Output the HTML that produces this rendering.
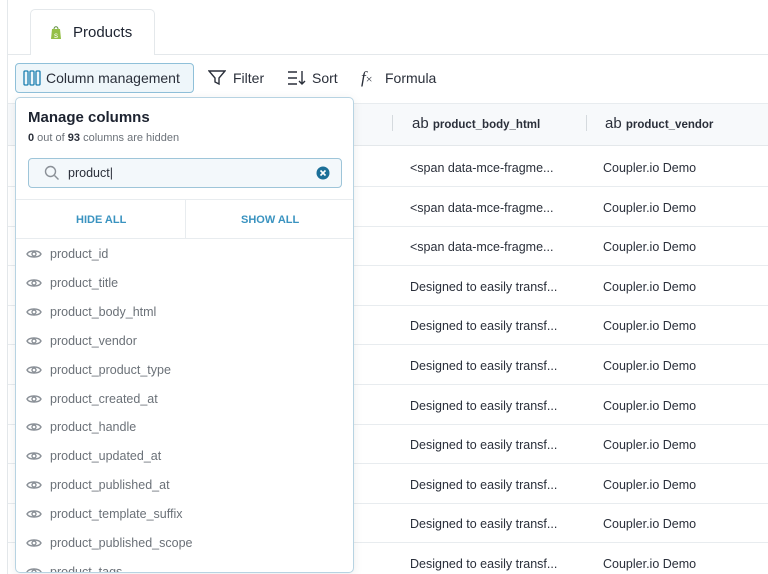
<!DOCTYPE html>
<html><head><style>
*{margin:0;padding:0;box-sizing:border-box}
body{width:768px;height:574px;overflow:hidden;background:#fff;font-family:"Liberation Sans",sans-serif;position:relative;color:#2a2f3a}
.abs{position:absolute}
.row{position:absolute;left:8px;width:760px;height:1px;background:#e8ecef}
.cell{position:absolute;font-size:12.5px;color:#2a2f3a}
.li{position:absolute;left:10px;font-size:12.5px;color:#6b7178;display:flex;align-items:center;white-space:nowrap}
.li svg{margin-right:8px}
</style></head><body>
<div class="abs" style="left:7px;top:0;width:1px;height:574px;background:#e4e8eb"></div>
<div class="abs" style="left:8px;top:54px;width:760px;height:1px;background:#e4e8eb"></div>
<div class="abs" style="left:30px;top:9px;width:125px;height:46px;border:1px solid #e4e8eb;border-bottom:none;border-radius:5px 5px 0 0;background:#fff"></div>
<svg class="abs" style="left:50px;top:26px" width="12" height="14" viewBox="0 0 12 14"><path d="M2 3h8l1 10H1z" fill="#95bf47"/><path d="M4 3c0-3 4-3 4 0" stroke="#5e8e3e" fill="none"/><text x="4" y="12" font-size="8" fill="#fff" font-family="Liberation Sans">s</text></svg>
<div class="abs" style="left:73px;top:24px;font-size:15px;color:#1d2330">Products</div>
<div class="abs" style="left:15px;top:63px;width:179px;height:30px;border:1px solid #8fc0d9;border-radius:4px;background:#eef6fa"></div>
<svg class="abs" style="left:23px;top:70px" width="18" height="16" viewBox="0 0 18 16" fill="none" stroke="#1b7fb0" stroke-width="1.3"><rect x="1" y="1" width="4" height="14" rx="1"/><rect x="7" y="1" width="4" height="14" rx="1"/><rect x="13" y="1" width="4" height="14" rx="1"/></svg>
<div class="abs" style="left:46px;top:70px;font-size:14px;color:#2a2f3a">Column management</div>
<svg class="abs" style="left:208px;top:70px" width="18" height="16" viewBox="0 0 18 16" fill="none" stroke="#2a2f3a" stroke-width="1.4"><path d="M1 1h16l-6 7v6l-4-2V8z"/></svg>
<div class="abs" style="left:233px;top:70px;font-size:14px">Filter</div>
<svg class="abs" style="left:287px;top:70px" width="20" height="16" viewBox="0 0 20 16" fill="none" stroke="#2a2f3a" stroke-width="1.4"><path d="M1 2h9M1 8h9M1 14h9M15 1v13M12 11l3 3 3-3"/></svg>
<div class="abs" style="left:312px;top:70px;font-size:14px">Sort</div>
<div class="abs" style="left:361px;top:68px;font-size:17px;font-style:italic;font-family:'Liberation Serif',serif">f<span style="font-size:12px;font-style:normal">×</span></div>
<div class="abs" style="left:385px;top:70px;font-size:14px">Formula</div>
<div class="abs" style="left:8px;top:103px;width:760px;height:43px;background:#f7f9fb;border-top:1px solid #e8ecef;border-bottom:1px solid #e4e8eb"></div>
<div class="abs" style="left:392px;top:115px;width:1px;height:16px;background:#d5dade"></div>
<div class="abs" style="left:586px;top:115px;width:1px;height:16px;background:#d5dade"></div>
<div class="abs" style="left:412px;top:115px;font-size:15px;color:#2a2f3a">ab <b style="font-size:11.5px">product_body_html</b></div>
<div class="abs" style="left:605px;top:115px;font-size:15px;color:#2a2f3a">ab <b style="font-size:11.5px">product_vendor</b></div>
<div id="rows"></div>
<script>
var h='';var tops=[186,226,265,305,344,384,424,463,503,542];
for(var i=0;i<tops.length;i++)h+='<div class="row" style="top:'+tops[i]+'px"></div>';
for(var i=0;i<11;i++){var y=161+i*39.6;var t=i<3?'&lt;span data-mce-fragme...':'Designed to easily transf...';
h+='<div class="cell" style="left:410px;top:'+y+'px">'+t+'</div><div class="cell" style="left:603px;top:'+y+'px">Coupler.io Demo</div>';}
document.getElementById('rows').innerHTML=h;
</script>
<div class="abs" style="left:15px;top:97px;width:339px;height:476px;background:#fff;border:1px solid #b7d3e2;border-radius:5px;box-shadow:0 2px 10px rgba(0,0,0,.08);overflow:hidden">
 <div class="abs" style="left:12px;top:11px;font-size:15px;font-weight:bold;color:#1d2330">Manage columns</div>
 <div class="abs" style="left:12px;top:34px;font-size:11px;color:#6b7178"><b style="color:#2a2f3a">0</b> out of <b style="color:#2a2f3a">93</b> columns are hidden</div>
 <div class="abs" style="left:12px;top:60px;width:314px;height:30px;border:1px solid #9ec5d9;border-radius:4px;background:#f3f8fb"></div>
 <svg class="abs" style="left:28px;top:67px" width="16" height="16" viewBox="0 0 16 16" fill="none" stroke="#8a9097" stroke-width="1.4"><circle cx="6.5" cy="6.5" r="5"/><path d="M10.5 10.5l4 4"/></svg>
 <div class="abs" style="left:52px;top:68px;font-size:12.5px;color:#2a2f3a">product|</div>
 <svg class="abs" style="left:300px;top:68px" width="14" height="14" viewBox="0 0 14 14"><circle cx="7" cy="7" r="6.5" fill="#1b6f98"/><path d="M4.5 4.5l5 5M9.5 4.5l-5 5" stroke="#fff" stroke-width="1.6"/></svg>
 <div class="abs" style="left:0;top:101px;width:339px;height:1px;background:#e8ecef"></div>
 <div class="abs" style="left:169px;top:101px;width:1px;height:40px;background:#e8ecef"></div>
 <div class="abs" style="left:0;top:140px;width:339px;height:1px;background:#e8ecef"></div>
 <div class="abs" style="left:60px;top:116px;font-size:11px;font-weight:bold;color:#3a93c0">HIDE ALL</div>
 <div class="abs" style="left:225px;top:116px;font-size:11px;font-weight:bold;color:#3a93c0">SHOW ALL</div>
 <div id="list" class="abs" style="left:0;top:143px;width:337px;height:332px"></div>
</div>
<script>
var n=['product_id','product_title','product_body_html','product_vendor','product_product_type','product_created_at','product_handle','product_updated_at','product_published_at','product_template_suffix','product_published_scope','product_tags'];
var eye='<svg width="16" height="12" viewBox="0 0 16 12" fill="none" stroke="#8a9097" stroke-width="1.4"><path d="M1 6c2-4 12-4 14 0c-2 4-12 4-14 0z"/><circle cx="8" cy="6" r="2"/></svg>';
var h='';for(var i=0;i<n.length;i++){h+='<div class="li" style="top:'+(6+i*28.9)+'px">'+eye+n[i]+'</div>';}
document.getElementById('list').innerHTML=h;
</script>
</body></html>
